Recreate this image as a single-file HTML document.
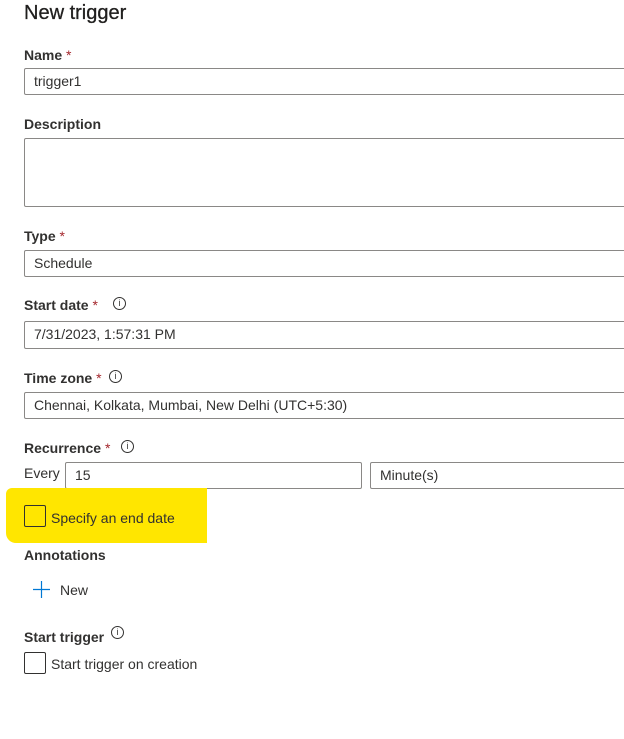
<!DOCTYPE html>
<html><head><style>
body{margin:0;width:624px;height:739px;background:#fff;position:relative;overflow:hidden;font-family:"Liberation Sans",sans-serif;color:#323130}
.a{position:absolute}
.t{font-size:20px;font-weight:400;left:24px;top:2px;color:#201f1e;-webkit-text-stroke:0.3px #201f1e}
.l{font-size:14px;font-weight:600;left:24px}
.s{color:#a4262c;font-weight:400}
.b{position:absolute;border:1px solid #8a8886;border-radius:2px;box-sizing:border-box;font-size:14px;padding-left:9px;line-height:25px;background:#fff}
.i{position:absolute;width:11px;height:11px;border:1px solid #323130;border-radius:50%;font-size:9px;line-height:11px;text-align:center;font-weight:400}
.cb{position:absolute;width:20px;height:20px;border:1px solid #323130;border-radius:2px}
</style></head><body>
<div class="a t">New trigger</div>
<div class="a l" style="top:47px">Name <span class="s">*</span></div>
<div class="b" style="left:24px;top:68px;width:620px;height:27px">trigger1</div>
<div class="a l" style="top:116px">Description</div>
<div class="b" style="left:24px;top:138px;width:620px;height:69px"></div>
<div class="a l" style="top:228px">Type <span class="s">*</span></div>
<div class="b" style="left:24px;top:250px;width:620px;height:27px">Schedule</div>
<div class="a l" style="top:297px">Start date <span class="s">*</span></div>
<div class="i" style="left:113px;top:297px">i</div>
<div class="b" style="left:24px;top:321px;width:620px;height:28px">7/31/2023, 1:57:31 PM</div>
<div class="a l" style="top:370px">Time zone <span class="s">*</span></div>
<div class="i" style="left:109px;top:370px">i</div>
<div class="b" style="left:24px;top:392px;width:620px;height:27px">Chennai, Kolkata, Mumbai, New Delhi (UTC+5:30)</div>
<div class="a l" style="top:440px">Recurrence <span class="s">*</span></div>
<div class="i" style="left:121px;top:440px">i</div>
<div class="a" style="left:24px;top:465px;font-size:14px">Every</div>
<div class="b" style="left:65px;top:462px;width:297px;height:27px">15</div>
<div class="b" style="left:370px;top:462px;width:274px;height:27px">Minute(s)</div>
<div class="a" style="left:6px;top:488px;width:201px;height:55px;background:#ffe600;border-radius:6px 0 0 10px"></div>
<div class="cb" style="left:24px;top:505px"></div>
<div class="a" style="left:51px;top:510px;font-size:14px">Specify an end date</div>
<div class="a l" style="top:547px">Annotations</div>
<svg class="a" style="left:33px;top:581px" width="17" height="17"><path d="M8.5 0V17M0 8.5H17" stroke="#0078d4" stroke-width="1.2"/></svg>
<div class="a" style="left:60px;top:582px;font-size:14px">New</div>
<div class="a l" style="top:629px">Start trigger</div>
<div class="i" style="left:111px;top:626px">i</div>
<div class="cb" style="left:24px;top:652px"></div>
<div class="a" style="left:51px;top:656px;font-size:14px">Start trigger on creation</div>
</body></html>
